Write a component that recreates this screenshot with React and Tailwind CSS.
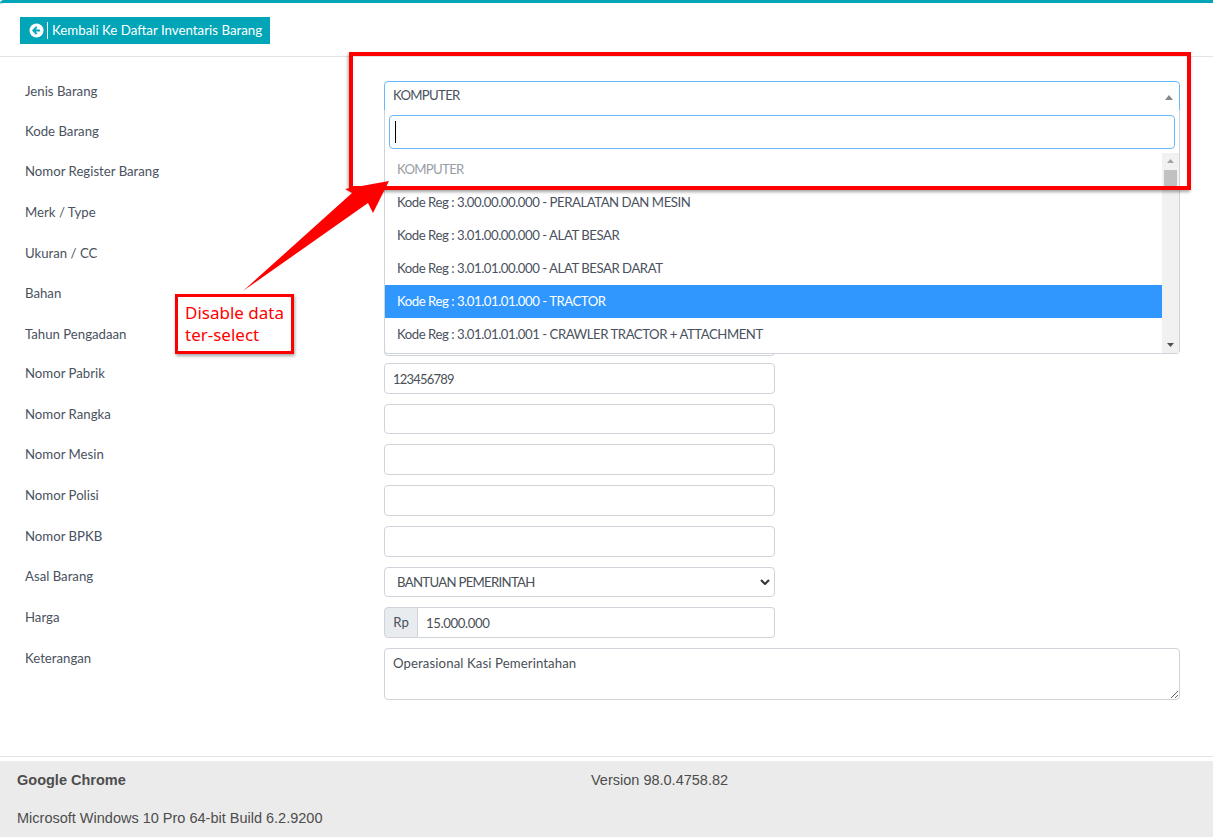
import React from 'react';

const inputClass = "w-full h-full border border-[#ced4da] rounded-[4px] bg-white px-2 pt-[2px] text-[13px] tracking-[-0.8px] text-[#495057] outline-none";

const options = [
  "Kode Reg : 3.00.00.00.000 - PERALATAN DAN MESIN",
  "Kode Reg : 3.01.00.00.000 - ALAT BESAR",
  "Kode Reg : 3.01.01.00.000 - ALAT BESAR DARAT",
  "Kode Reg : 3.01.01.01.000 - TRACTOR",
  "Kode Reg : 3.01.01.01.001 - CRAWLER TRACTOR + ATTACHMENT",
];

function Row({ label, children, className = "mb-[10px]", labelPad = "pt-[1px]" }) {
  return (
    <div className={`flex h-[30.7px] ${className}`}>
      <label className={`w-[359px] shrink-0 text-[13.2px] leading-[18px] text-[#4a5260] ${labelPad}`}>{label}</label>
      <div className="flex-1 relative">{children}</div>
    </div>
  );
}

function Half({ value = "" }) {
  return (
    <div className="w-[391px] h-full">
      <input readOnly defaultValue={value} className={inputClass} />
    </div>
  );
}

function Dropdown() {
  return (
    <div className="absolute left-0 top-[29px] w-[796px] h-[244px] bg-white border border-t-0 border-[#ced4da] rounded-b-[4px] z-10">
      <div className="px-[4px] pt-[5px] h-[43px]">
        <div className="h-[34px] border border-[#66b9ff] rounded-[4px] flex items-center pl-[5px]">
          <div className="w-px h-[22px] bg-black" />
        </div>
      </div>
      <div className="flex h-[200px]">
        <ul className="flex-1">
          <li className="h-[33px] pl-[12px] flex items-center text-[13.2px] tracking-[-0.7px] text-[#9a9ea5]">KOMPUTER</li>
          {options.map((o, i) => (
            <li
              key={o}
              className={i === 3
                ? "h-[33px] pl-[12px] flex items-center text-[13.2px] tracking-[-0.47px] bg-[#3097ff] text-white"
                : "h-[33px] pl-[12px] flex items-center text-[13.2px] tracking-[-0.47px] text-[#4a5260]"}
            >
              {o}
            </li>
          ))}
        </ul>
        <div className="w-[17px] bg-[#f1f1f1] flex flex-col items-center">
          <svg width="9" height="17" viewBox="0 0 9 17"><path d="M4.5 6 8 10H1z" fill="#a3a3a3" /></svg>
          <div className="w-[13px] h-[17px] bg-[#c1c1c1]" />
          <div className="flex-1" />
          <svg width="9" height="17" viewBox="0 0 9 17"><path d="M4.5 11 8 7H1z" fill="#505050" /></svg>
        </div>
      </div>
    </div>
  );
}

export default function App() {
  return (
    <div className="relative w-[1213px] h-[837px] overflow-hidden bg-white font-['Lato','Noto_Sans',sans-serif]">
      <div className="h-[57px] border-t-[3px] border-b border-t-[#00a5b8] border-b-[#e4e4e4] rounded-tl-[4px] pl-[20px] pt-[14px]">
        <button className="h-[27px] w-[250px] bg-[#00a5b8] text-white text-[13.3px] whitespace-nowrap flex items-center pl-[9px]">
          <svg width="15" height="15" viewBox="0 0 16 16" className="mr-[2px]">
            <circle cx="8" cy="8" r="7.5" fill="#fff" />
            <path d="M8.2 4.2 4.6 8l3.6 3.8M4.8 8h6.8" stroke="#00a5b8" strokeWidth="2" fill="none" />
          </svg>
          <span className="w-px h-[17px] bg-white ml-[1px] mr-[4px]" />
          <span>Kembali Ke Daftar Inventaris Barang</span>
        </button>
      </div>

      <div className="pl-[25px] pr-[33px] pt-[24px]">
        <Row label="Jenis Barang">
          <div className="h-full border border-[#66b9ff] rounded-t-[4px] flex items-center justify-between pl-[8px] pr-[6px] pb-[1px] text-[13.2px] tracking-[-0.7px] text-[#4a5260]">
            <span>KOMPUTER</span>
            <svg width="8" height="5" viewBox="0 0 8 5" className="mt-[3px]"><path d="M4 0 8 5H0z" fill="#888" /></svg>
          </div>
          <Dropdown />
        </Row>
        <Row label="Kode Barang" labelPad=""><Half /></Row>
        <Row label="Nomor Register Barang" labelPad=""><Half /></Row>
        <Row label="Merk / Type" labelPad=""><Half /></Row>
        <Row label="Ukuran / CC" labelPad=""><Half /></Row>
        <Row label="Bahan" labelPad=""><Half /></Row>
        <Row label="Tahun Pengadaan" labelPad="" className="mb-[7.3px]"><Half /></Row>
        <Row label="Nomor Pabrik"><Half value="123456789" /></Row>
        <Row label="Nomor Rangka"><Half /></Row>
        <Row label="Nomor Mesin"><Half /></Row>
        <Row label="Nomor Polisi"><Half /></Row>
        <Row label="Nomor BPKB"><Half /></Row>
        <Row label="Asal Barang" labelPad="">
          <div className="w-[391px] h-full relative">
            <select className="w-full h-full appearance-none border border-[#ced4da] rounded-[4px] bg-white pl-[12px] pt-[3px] text-[13.2px] tracking-[-0.7px] text-[#495057] outline-none">
              <option>BANTUAN PEMERINTAH</option>
            </select>
            <svg width="10" height="6" viewBox="0 0 10 6" className="absolute right-[5px] top-[12px]">
              <path d="M1 1 5 5 9 1" stroke="#333" strokeWidth="2" fill="none" />
            </svg>
          </div>
        </Row>
        <Row label="Harga">
          <div className="w-[391px] h-full flex">
            <span className="w-[34px] shrink-0 bg-[#e9ecef] border border-[#ced4da] rounded-l-[4px] flex items-center justify-center text-[13.2px] text-[#495057]">Rp</span>
            <input readOnly defaultValue="15.000.000" className="flex-1 min-w-0 border border-l-0 border-[#ced4da] rounded-r-[4px] px-2 pt-[3px] text-[13.2px] tracking-[-0.4px] text-[#495057] outline-none" />
          </div>
        </Row>
        <div className="flex">
          <label className="w-[359px] shrink-0 pt-[1px] text-[13.2px] leading-[18px] text-[#4a5260]">Keterangan</label>
          <textarea readOnly defaultValue="Operasional Kasi Pemerintahan" className="flex-1 h-[52px] border border-[#ced4da] rounded-[4px] px-2 py-[4px] text-[13.2px] tracking-[0.1px] leading-[20px] text-[#495057] outline-none" />
        </div>
      </div>

      <div className="mt-[56px] border-t border-[#e4e4e4] pt-[4px] font-['Liberation_Sans',sans-serif] text-[14.5px] text-[#4d4d4d]">
        <div className="h-[76px] bg-[#ebebeb] pl-[17px] pt-[10px]">
          <div className="flex leading-[18px]">
            <span className="w-[574px] font-bold">Google Chrome</span>
            <span>Version 98.0.4758.82</span>
          </div>
          <div className="mt-[20px] leading-[18px]">Microsoft Windows 10 Pro 64-bit Build 6.2.9200</div>
        </div>
      </div>

      {/* annotation overlay */}
      <div className="absolute left-[349px] top-[52px] w-[842px] h-[138px] border-4 border-[#ff0000] shadow-[-1px_2px_3px_rgba(0,0,0,0.35)] z-20" />
      <svg width="1213" height="837" className="absolute left-0 top-0 z-20 pointer-events-none">
        <path d="M243 291 352 193 345 189 389 181 373 213 368 203Z" fill="#ff0000" />
      </svg>
      <div className="absolute left-[175px] top-[294px] w-[119px] h-[60px] border-[3px] border-[#ff0000] bg-white shadow-[1px_2px_3px_rgba(0,0,0,0.35)] z-20 pl-[7px] pt-[5px] text-[17px] leading-[22px] text-[#ff0000] font-['Noto_Sans',sans-serif]">
        Disable data<br />ter-select
      </div>
    </div>
  );
}
